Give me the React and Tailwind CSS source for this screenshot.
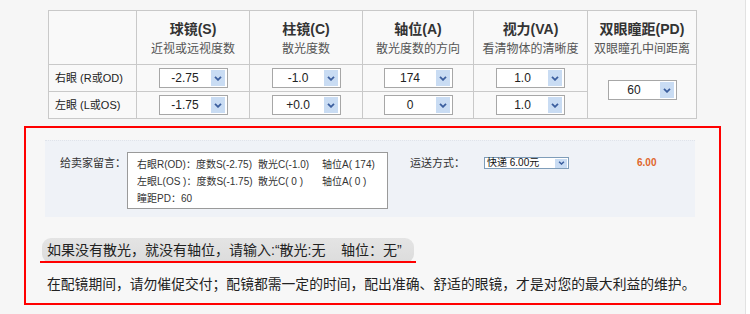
import React from "react";

const FONT = { fontFamily: '"Liberation Sans", "Noto Sans CJK SC", sans-serif' };

function Chevron({ w = 8, h = 5 }) {
  return (
    <svg width={w} height={h} viewBox="0 0 8 5" fill="none">
      <polyline points="1,0.8 4,3.8 7,0.8" stroke="#3b5e9e" strokeWidth="1.8" />
    </svg>
  );
}

function Sel({ value }) {
  return (
    <div className="mx-auto flex h-[20px] w-[69px] items-center border border-[#a7a7a7] bg-white">
      <div className="flex-1 text-center text-[12px] leading-[18px] text-[#222]">{value}</div>
      <div className="mr-[2px] flex h-[16px] w-[14px] items-center justify-center bg-[#c9dcf3]">
        <Chevron />
      </div>
    </div>
  );
}

function Head({ title, sub }) {
  return (
    <th className="border border-[#c9c9c9] pt-[8px] pb-[5px] align-top font-normal">
      <div className="text-[14px] font-bold leading-[20px] text-[#333]">{title}</div>
      <div className="text-[12px] leading-[20px] text-[#555]">{sub}</div>
    </th>
  );
}

export default function App() {
  return (
    <div className="flex h-[314px] w-[750px] overflow-hidden bg-[#f6f6f6]" style={FONT}>
      <div className="w-[745px] shrink-0">
        <div className="pt-[10px] pl-[48px]">
          <table className="w-[648px] table-fixed border-collapse bg-[#f9f9f9]">
            <colgroup>
              <col className="w-[88px]" />
              <col className="w-[113px]" />
              <col className="w-[113px]" />
              <col className="w-[111px]" />
              <col className="w-[114px]" />
              <col className="w-[109px]" />
            </colgroup>
            <thead>
              <tr className="h-[53px]">
                <th className="border border-[#c9c9c9]"></th>
                <Head title="球镜(S)" sub="近视或远视度数" />
                <Head title="柱镜(C)" sub="散光度数" />
                <Head title="轴位(A)" sub="散光度数的方向" />
                <Head title="视力(VA)" sub="看清物体的清晰度" />
                <Head title="双眼瞳距(PD)" sub="双眼瞳孔中间距离" />
              </tr>
            </thead>
            <tbody>
              <tr className="h-[27px]">
                <td className="border border-[#c9c9c9] pl-[6px] text-[11px] whitespace-nowrap text-[#222]">右眼 (R或OD)</td>
                <td className="border border-[#c9c9c9]"><Sel value="-2.75" /></td>
                <td className="border border-[#c9c9c9]"><Sel value="-1.0" /></td>
                <td className="border border-[#c9c9c9]"><Sel value="174" /></td>
                <td className="border border-[#c9c9c9]"><Sel value="1.0" /></td>
                <td rowSpan={2} className="border border-[#c9c9c9] pb-[3px]"><Sel value="60" /></td>
              </tr>
              <tr className="h-[27px]">
                <td className="border border-[#c9c9c9] pl-[6px] text-[11px] whitespace-nowrap text-[#222]">左眼 (L或OS)</td>
                <td className="border border-[#c9c9c9]"><Sel value="-1.75" /></td>
                <td className="border border-[#c9c9c9]"><Sel value="+0.0" /></td>
                <td className="border border-[#c9c9c9]"><Sel value="0" /></td>
                <td className="border border-[#c9c9c9]"><Sel value="1.0" /></td>
              </tr>
            </tbody>
          </table>
        </div>

        <div className="mt-[7px] ml-[24px] h-[179px] w-[697px] border-2 border-[#ff0000] bg-[#f7f7f7]">
          <div className="mt-[12px] ml-[19px] flex h-[77px] w-[650px] border-t border-dotted border-[#dfe3ea] bg-[#eff2f7] pt-[11px]">
            <div className="ml-[15px] w-[67px] pt-[4px] text-[11px] leading-[14px] text-[#333]">给卖家留言：</div>
            <div className="h-[57px] w-[261px] overflow-hidden border border-[#9a9a9a] bg-white pt-[3px] pl-[9px] text-[10px] leading-[17px] text-[#333] whitespace-nowrap">
              <div>
                <span className="inline-block w-[121px]">右眼R(OD)：度数S(-2.75)</span>
                <span className="inline-block w-[64px]">散光C(-1.0)</span>
                <span>轴位A( 174)</span>
              </div>
              <div>
                <span className="inline-block w-[121px]">左眼L(OS )：度数S(-1.75)</span>
                <span className="inline-block w-[64px]">散光C( 0 )</span>
                <span>轴位A( 0 )</span>
              </div>
              <div>瞳距PD：60</div>
            </div>
            <div className="ml-[22px] w-[74px] pt-[4px] text-[11px] leading-[14px] text-[#333]">运送方式：</div>
            <div className="mt-[5px] flex h-[12px] w-[85px] items-center border border-[#7f9db9] bg-white">
              <div className="flex-1 pl-[2px] text-[10px] leading-[10px] text-[#111]">快递 6.00元</div>
              <div className="mr-[1px] flex h-[9px] w-[12px] items-center justify-center bg-[#c9dcf3]">
                <Chevron w={7} h={4} />
              </div>
            </div>
            <div className="ml-[68px] pt-[5px] text-[10px] font-bold leading-[12px] text-[#e0662b]">6.00</div>
          </div>

          <div className="relative mt-[21px] ml-[16px] w-fit">
            <div className="h-[25px] rounded-[9px] bg-gradient-to-b from-[#e4e4e4] to-[#dcdcdc] pr-[12px] pl-[5px] text-[14px] leading-[25px] text-[#222]">
              如果没有散光，就没有轴位，请输入:“散光:无&nbsp;&nbsp;&nbsp;&nbsp;轴位：无”
            </div>
            <div className="absolute top-[23px] left-[-2px] h-[2px] w-[376px] bg-[#ff0000]"></div>
          </div>

          <div className="mt-[13px] ml-[21px] text-[13.8px] leading-[18px] text-[#222] whitespace-nowrap">
            在配镜期间，请勿催促交付；配镜都需一定的时间，配出准确、舒适的眼镜，才是对您的最大利益的维护。
          </div>
        </div>
      </div>
      <div className="flex-1 border-l border-[#e2e2e2] bg-white"></div>
    </div>
  );
}
